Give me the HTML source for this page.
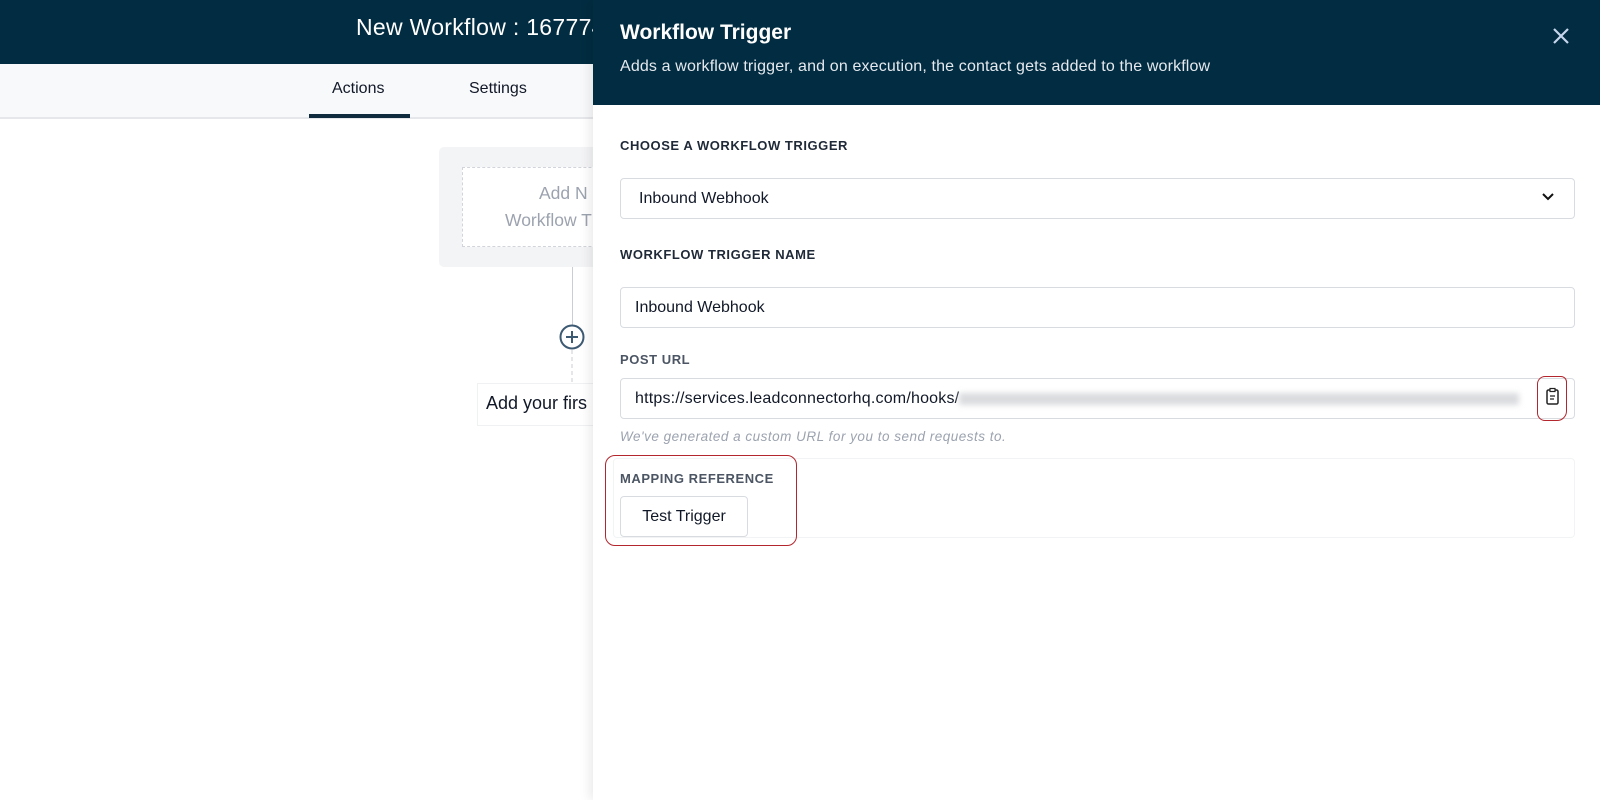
<!DOCTYPE html>
<html><head><meta charset="utf-8"><style>
*{box-sizing:border-box;margin:0;padding:0}
body{width:1600px;height:800px;overflow:hidden;background:#fff;font-family:"Liberation Sans",sans-serif;position:relative;color:#111827}
.abs{position:absolute}
.hdr{left:0;top:0;width:1600px;height:64px;background:#022c41}
.tabs{left:0;top:64px;width:600px;height:55px;background:#f8f9fb;border-bottom:2px solid #e5e7eb}
.panel{left:593px;top:0;width:1007px;height:800px;background:#fff;box-shadow:-4px 0 10px rgba(0,0,0,.08)}
.ph{left:0;top:0;width:1007px;height:105px;background:#022c41}
.lbl{font-size:13px;font-weight:bold;letter-spacing:.55px;color:#1f2937}
.box{border:1px solid #d8dce1;border-radius:4px;background:#fff;font-size:16px;color:#111827}
</style></head><body>
<div class="abs hdr"></div>
<div class="abs" style="left:356px;top:14px;font-size:23px;letter-spacing:.3px;color:#fff;white-space:nowrap">New Workflow : 167774</div>
<div class="abs tabs"></div>
<div class="abs" style="left:332px;top:80px;font-size:16px;color:#111827">Actions</div>
<div class="abs" style="left:309px;top:114px;width:101px;height:4px;background:#0f2b3d"></div>
<div class="abs" style="left:469px;top:80px;font-size:16px;color:#111827">Settings</div>

<div class="abs" style="left:439px;top:147px;width:200px;height:120px;background:#f3f4f6;border-radius:5px"></div>
<div class="abs" style="left:462px;top:167px;width:180px;height:80px;background:#fff;border:1px dashed #d1d5db"></div>
<div class="abs" style="left:539px;top:183px;font-size:17.5px;color:#9ca3af">Add N</div>
<div class="abs" style="left:505px;top:210px;font-size:17.5px;color:#9ca3af">Workflow T</div>
<div class="abs" style="left:572px;top:267px;width:1px;height:58px;background:#c9ced4"></div>
<svg class="abs" style="left:558px;top:323px" width="28" height="60"><circle cx="14" cy="14" r="11.5" fill="#fff" stroke="#3d5a73" stroke-width="2"/><path d="M14 8v12M8 14h12" stroke="#3d5a73" stroke-width="2"/><path d="M14 27v33" stroke="#c9ced4" stroke-dasharray="4 3"/></svg>
<div class="abs" style="left:477px;top:383px;width:140px;height:43px;background:#fff;border:1px solid #f0f1f3"></div>
<div class="abs" style="left:486px;top:393px;font-size:18px;color:#111827;white-space:nowrap">Add your firs</div>

<div class="abs panel">
 <div class="abs ph"></div>
 <div class="abs" style="left:27px;top:21px;font-size:21px;font-weight:bold;color:#fff">Workflow Trigger</div>
 <div class="abs" style="left:27px;top:58px;font-size:16px;letter-spacing:.15px;color:#e5e9ee">Adds a workflow trigger, and on execution, the contact gets added to the workflow</div>
 <svg class="abs" style="left:958px;top:26px" width="20" height="20"><path d="M3 3L17 17M17 3L3 17" stroke="#c7d6ec" stroke-width="2.2"/></svg>

 <div class="abs lbl" style="left:27px;top:138px">CHOOSE A WORKFLOW TRIGGER</div>
 <div class="abs box" style="left:27px;top:178px;width:955px;height:41px;padding:11px 18px">Inbound Webhook</div>
 <svg class="abs" style="left:948px;top:192px" width="14" height="10"><path d="M2 2l5 5 5-5" stroke="#111" stroke-width="2" fill="none"/></svg>

 <div class="abs lbl" style="left:27px;top:247px">WORKFLOW TRIGGER NAME</div>
 <div class="abs box" style="left:27px;top:287px;width:955px;height:41px;padding:11px 14px">Inbound Webhook</div>

 <div class="abs lbl" style="left:27px;top:352px;color:#4b5563">POST URL</div>
 <div class="abs box" style="left:27px;top:378px;width:955px;height:41px;padding:11px 14px;white-space:nowrap;overflow:hidden;letter-spacing:.2px">https://services.leadconnectorhq.com/hooks/<span style="display:inline-block;width:560px;height:12px;background:#d9dbde;filter:blur(3px);vertical-align:middle"></span></div>
 <svg class="abs" style="left:952px;top:387px" width="16" height="20"><rect x="2" y="3" width="11" height="14" rx="1.5" fill="none" stroke="#222" stroke-width="1.5"/><rect x="5" y="1.5" width="5" height="3" fill="#fff" stroke="#222" stroke-width="1.2"/><path d="M5 9h5M5 12h4" stroke="#222" stroke-width="1.2"/></svg>
 <div class="abs" style="left:944px;top:376px;width:30px;height:45px;border:1.3px solid #b3262d;border-radius:8px 6px 10px 8px"></div>
 <div class="abs" style="left:27px;top:429px;font-size:13.5px;letter-spacing:.5px;font-style:italic;color:#9ca3af">We've generated a custom URL for you to send requests to.</div>

 <div class="abs" style="left:20px;top:458px;width:962px;height:80px;border:1px solid #f2f3f5;border-radius:4px"></div>
 <div class="abs lbl" style="left:27px;top:471px;color:#4b5563">MAPPING REFERENCE</div>
 <div class="abs box" style="left:27px;top:496px;width:128px;height:41px;padding:11px 0;text-align:center;font-size:16px">Test Trigger</div>
 <div class="abs" style="left:12px;top:455px;width:192px;height:91px;border:1.3px solid #b3262d;border-radius:10px"></div>
</div>
</body></html>
